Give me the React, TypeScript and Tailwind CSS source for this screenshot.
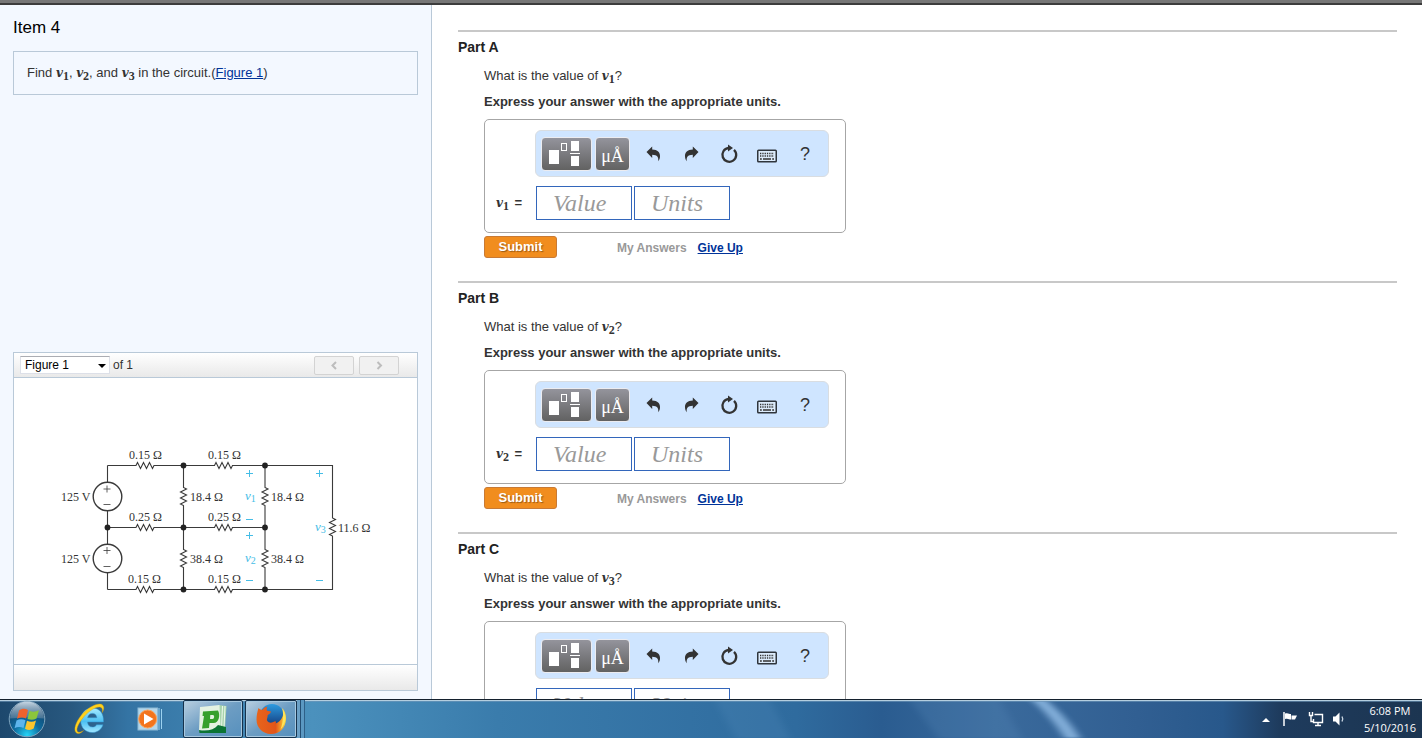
import { useState } from "react";

const PARTS = [
    { name: "Part A", index: 1 },
    { name: "Part B", index: 2 },
    { name: "Part C", index: 3 },
];

function MathVar({ index }: { index: number }) {
    return (
        <span className="font-bold">
            <i className="font-['DejaVu_Serif',serif] text-xs leading-none">v</i>
            <span className="relative top-[3px] font-['Liberation_Serif',serif] text-xs leading-none">{index}</span>
        </span>
    );
}

/* ---------- circuit figure ---------- */

const H_ZIG = "l1.5 -3 l3 6 l3 -6 l3 6 l3 -6 l3 6 l1.5 -3";
const V_ZIG = "l3 1.5 l-6 3 l6 3 l-6 3 l6 3 l-6 3 l3 1.5";

const LABELS = [
    { x: 129, y: 459, text: "0.15 Ω" },
    { x: 208, y: 459, text: "0.15 Ω" },
    { x: 61, y: 501, text: "125 V" },
    { x: 190, y: 501, text: "18.4 Ω" },
    { x: 271, y: 501, text: "18.4 Ω" },
    { x: 129, y: 521, text: "0.25 Ω" },
    { x: 208, y: 521, text: "0.25 Ω" },
    { x: 338, y: 532, text: "11.6 Ω" },
    { x: 61, y: 563, text: "125 V" },
    { x: 190, y: 563, text: "38.4 Ω" },
    { x: 271, y: 563, text: "38.4 Ω" },
    { x: 128, y: 583, text: "0.15 Ω" },
    { x: 208, y: 583, text: "0.15 Ω" },
];

const NODES = [
    [183.5, 465.5],
    [265, 465.5],
    [107.5, 527.5],
    [183.5, 527.5],
    [265, 527.5],
    [183.5, 589.5],
    [265, 589.5],
];

function Circuit() {
    return (
        <svg viewBox="56 446 320 150" className="h-[150px] w-80" role="img" aria-label="Figure 1">
            <g fill="none" stroke="#3a3a3a" strokeWidth="1.1">
                {[465.5, 527.5, 589.5].map((y) => (
                    <path key={y} d={`M107.5 ${y} H136 ${H_ZIG} H214.5 ${H_ZIG} H265`} />
                ))}
                <path d="M107.5 465.5 V482 M107.5 511 V544 M107.5 573 V589.5" />
                {[183.5, 265].map((x) => (
                    <path key={x} d={`M${x} 465.5 V487.5 ${V_ZIG} V549.5 ${V_ZIG} V589.5`} />
                ))}
                <path d={`M265 465.5 H332.5 V518 ${V_ZIG} V589.5 H265`} />
                <circle cx="107.5" cy="496.5" r="14.3" strokeWidth="1.4" />
                <circle cx="107.5" cy="558.5" r="14.3" strokeWidth="1.4" />
                <path
                    strokeWidth="0.8"
                    d="M103.5 489 h7 M107 485.5 v7 M103.5 504.5 h7 M103.5 550.5 h7 M107 547 v7 M103.5 566.5 h7"
                />
            </g>
            {NODES.map(([x, y]) => (
                <circle key={`${x}-${y}`} cx={x} cy={y} r="2.9" fill="#222" />
            ))}
            <g fill="#333" fontSize="12" fontFamily="Liberation Serif, serif">
                {LABELS.map((l) => (
                    <text key={`${l.x}-${l.y}`} x={l.x} y={l.y}>
                        {l.text}
                    </text>
                ))}
            </g>
            <path
                stroke="#45bde6"
                strokeWidth="1"
                fill="none"
                d="M246 473.5 h7 M249.5 470 v7 M246 519.5 h7 M246 535.5 h7 M249.5 532 v7 M246 580.5 h7 M316 473.5 h7 M319.5 470 v7 M316 580.5 h7"
            />
            <g fill="#45bde6" fontSize="13" fontFamily="Liberation Serif, serif">
                {[
                    [245, 500],
                    [245, 562],
                    [315, 531],
                ].map(([x, y], i) => (
                    <text key={i} x={x} y={y}>
                        <tspan fontStyle="italic">v</tspan>
                        <tspan fontSize="10" dy="2">
                            {i + 1}
                        </tspan>
                    </text>
                ))}
            </g>
        </svg>
    );
}

function PageButton({ label, d }: { label: string; d: string }) {
    return (
        <button
            aria-label={label}
            className="flex h-[19px] w-10 items-center justify-center rounded-xs border border-[#d3d3d3] bg-[#f1f1f1]"
        >
            <svg viewBox="0 0 7 9" className="h-[9px] w-[7px]">
                <path d={d} fill="none" stroke="#bdbdbd" strokeWidth="2" />
            </svg>
        </button>
    );
}

function FigurePanel() {
    return (
        <section className="mt-auto mb-2 flex h-[339px] flex-col border border-[#b9c9d8] bg-white">
            <div className="flex h-[25px] shrink-0 items-center border-b border-[#b9c9d8] bg-linear-to-b from-white to-[#e9e9e9] pl-1.5 text-xs text-[#333]">
                <label className="relative flex items-center">
                    <select
                        aria-label="Figure"
                        className="h-[18px] w-[90px] appearance-none border border-[#dde0e8] border-t-[#abadb3] bg-white pl-1 text-xs text-black"
                    >
                        <option>Figure 1</option>
                    </select>
                    <svg viewBox="0 0 8 4" className="pointer-events-none absolute top-2 right-1 h-1 w-2">
                        <path d="M0 0H8L4 4Z" fill="#000" />
                    </svg>
                </label>
                <span className="ml-[3px]">of 1</span>
                <div className="mr-[18px] ml-auto flex gap-[5px]">
                    <PageButton label="Previous figure" d="M5 1L1.5 4.5L5 8" />
                    <PageButton label="Next figure" d="M1.5 1L5 4.5L1.5 8" />
                </div>
            </div>
            <div className="flex flex-1 items-center justify-center">
                <Circuit />
            </div>
            <div className="h-[26px] shrink-0 border-t border-[#b9c9d8] bg-linear-to-b from-white to-[#e9e9e9]" />
        </section>
    );
}

/* ---------- answer editor ---------- */

function UndoIcon() {
    return (
        <svg viewBox="0 0 15 16" className="h-4 w-[15px]" fill="#333">
            <path d="M0.5 6L6.2 0.5V3.6C11.5 3.7 14.3 6.5 14 10.5C13.9 12.5 13.2 14 12.2 15.3C12.7 11.3 11.5 8.9 6.2 8.8V12Z" />
        </svg>
    );
}

function ResetIcon() {
    return (
        <svg viewBox="0 0 18 20" className="h-5 w-[18px]">
            <path d="M14 5.8A6.9 6.9 0 1 1 8.5 4" fill="none" stroke="#333" strokeWidth="2.3" />
            <path d="M8 0.5L13 4L8 7.5Z" fill="#333" />
        </svg>
    );
}

function KeyboardIcon() {
    return (
        <svg viewBox="0 0 20 14" className="mt-1 h-3.5 w-5">
            <rect x="0.75" y="1.25" width="18.5" height="11.5" rx="0.8" fill="#dcebfb" stroke="#2f353c" strokeWidth="1.5" />
            <path d="M3 4.5H17M3 7H17" stroke="#333" strokeWidth="1.3" strokeDasharray="1.3 1" />
            <path d="M3 10H4.8M6 10H14M15.2 10H17" stroke="#333" strokeWidth="1.3" />
        </svg>
    );
}

const DARK_KEY =
    "flex h-[34px] items-center justify-center rounded border border-[#ececf0] bg-linear-to-b from-[#94949c] to-[#626262]";
const TOOL = "flex h-[34px] w-[38px] items-center justify-center";

function Toolbar() {
    return (
        <div className="flex h-[47px] w-[294px] items-center rounded-md border border-[#d9dde1] bg-[#cfe5ff] pl-[5px]">
            <button aria-label="Templates" className={`${DARK_KEY} w-[51px]`}>
                <svg viewBox="0 0 49 32" className="h-8 w-[49px]" fill="#fff">
                    <rect x="7" y="12" width="10" height="14" />
                    <rect x="19.5" y="5.5" width="5" height="7" fill="none" stroke="#fff" />
                    <rect x="29" y="3" width="8" height="10" />
                    <rect x="28" y="15" width="10" height="1" />
                    <rect x="29" y="18" width="8" height="10" />
                </svg>
            </button>
            <button
                aria-label="Units symbols"
                className={`${DARK_KEY} ml-[3px] w-[35px] pt-1 font-['Liberation_Serif',serif] text-lg text-white`}
            >
                μÅ
            </button>
            <button aria-label="Undo" className={`${TOOL} ml-1`}>
                <UndoIcon />
            </button>
            <button aria-label="Redo" className={TOOL}>
                <span className="-scale-x-100">
                    <UndoIcon />
                </span>
            </button>
            <button aria-label="Reset" className={TOOL}>
                <ResetIcon />
            </button>
            <button aria-label="Keyboard" className={TOOL}>
                <KeyboardIcon />
            </button>
            <button aria-label="Help" className={`${TOOL} text-lg text-[#333]`}>
                ?
            </button>
        </div>
    );
}

const ANSWER_INPUT =
    "h-[34px] w-24 border border-[#3366bb] bg-white pl-4 font-['Liberation_Serif',serif] text-2xl text-[#333] italic outline-none placeholder:text-[#999]";

function Part({ name, index }: { name: string; index: number }) {
    const [value, setValue] = useState("");
    const [units, setUnits] = useState("");

    return (
        <section className="border-t-2 border-[#c8c8c8] pt-[5px] pb-[23px] text-[13px] leading-5 text-[#333]">
            <h2 className="text-sm leading-5 font-bold text-[#222]">{name}</h2>
            <div className="pl-[26px]">
                <p className="mt-[9px] h-5">
                    What is the value of <MathVar index={index} />?
                </p>
                <p className="mt-1.5 font-bold">Express your answer with the appropriate units.</p>
                <div className="mt-[7px] w-[362px] rounded-[5px] border border-[#a6a6a6] pt-2.5 pb-3">
                    <div className="pl-[50px]">
                        <Toolbar />
                    </div>
                    <div className="mt-[9px] flex items-center">
                        <span className="w-[51px] pl-[11px]">
                            <MathVar index={index} /> <b className="ml-0.5">=</b>
                        </span>
                        <div className="flex gap-0.5">
                            <input
                                aria-label={`Value ${index}`}
                                placeholder="Value"
                                value={value}
                                onChange={(e) => setValue(e.target.value)}
                                className={ANSWER_INPUT}
                            />
                            <input
                                aria-label={`Units ${index}`}
                                placeholder="Units"
                                value={units}
                                onChange={(e) => setUnits(e.target.value)}
                                className={ANSWER_INPUT}
                            />
                        </div>
                    </div>
                </div>
                <div className="mt-[3px] flex items-center text-xs font-bold">
                    <button className="h-[22px] w-[73px] rounded-[3px] border border-[#c87a35] bg-[#f18d1e] text-[13px] leading-5 font-bold text-white text-shadow-[1px_1px_1px_#9a5a14]">
                        Submit
                    </button>
                    <span className="ml-[60px] pt-0.5 text-[#999]">My Answers</span>
                    <a href="#give-up" className="ml-[11px] pt-0.5 text-[#003399] underline">
                        Give Up
                    </a>
                </div>
            </div>
        </section>
    );
}

/* ---------- taskbar ---------- */

function StartOrb() {
    return (
        <svg viewBox="0 0 38 38" className="h-[38px] w-[38px]">
            <defs>
                <radialGradient id="orb" cx="50%" cy="95%" r="85%">
                    <stop offset="0" stopColor="#25d4f7" />
                    <stop offset="0.45" stopColor="#0d6c9f" />
                    <stop offset="1" stopColor="#153f66" />
                </radialGradient>
                <linearGradient id="orbShine" x2="0" y2="1">
                    <stop offset="0" stopColor="#dbe9f4" stopOpacity="0.9" />
                    <stop offset="1" stopColor="#7792a8" stopOpacity="0.5" />
                </linearGradient>
            </defs>
            <circle cx="19" cy="19" r="17.8" fill="url(#orb)" stroke="#7fa4bd" />
            <path d="M2 18.5A17 17 0 0 1 36 18.5C26 17 12 17 2 18.5Z" fill="url(#orbShine)" />
            <path d="M11 10.5C14 8.3 17 8.3 20 10L18 18.5C15 17 12 17 9 18.8Z" fill="#f0622d" />
            <path d="M21.5 10.7C24.5 12.2 27.5 12 31 10.3L28.5 18.5C25.5 20 22.5 20 19.5 18.9Z" fill="#8cc63c" />
            <path d="M8.5 20.4C11.5 18.8 14.5 18.8 17.5 20.2L15.5 28C12.5 26.6 9.5 26.6 6.5 28.3Z" fill="#5db5ec" />
            <path d="M19 20.7C22 22 25 22 28 20.4L25.7 28.5C23 30.3 20 30.3 17 28.7Z" fill="#fbc52e" />
        </svg>
    );
}

function ExplorerIcon() {
    return (
        <svg viewBox="0 0 34 34" className="h-[34px] w-[34px]">
            <defs>
                <linearGradient id="ie" x2="0" y2="1">
                    <stop offset="0" stopColor="#a9ecff" />
                    <stop offset="0.55" stopColor="#4cc0f2" />
                    <stop offset="1" stopColor="#a2e7ff" />
                </linearGradient>
            </defs>
            <path
                fillRule="evenodd"
                fill="url(#ie)"
                stroke="#3293cd"
                strokeWidth="0.5"
                d="M30.5 20H14.5C14.8 23.2 16.5 25 19.5 25C21.5 25 22.9 24.2 23.5 22.7H30C28.5 27.5 24.5 30.5 19.3 30.5C12.3 30.5 7.7 25.6 7.7 18.5C7.7 11.3 12.6 6 19.3 6C26.6 6 31 11.5 30.5 20ZM14.6 15.7H23.9C23.6 12.9 21.9 11.4 19.4 11.4C16.8 11.4 15.1 12.9 14.6 15.7Z"
            />
            <path
                d="M6 31.5C-0.5 32 1 22 8.5 13C16 4 27 -0.5 30 3.5C31.5 5.5 30.7 8 29.3 10.6C29.7 8 29.5 6.6 28 5.5C24.5 3.7 16.5 8 10.5 15.2C4.5 22.4 2.5 28.5 5 30C6.5 30.8 8.3 30 10.5 28.6C9 30.2 7.5 31.3 6 31.5Z"
                fill="#ffd21c"
                stroke="#d99c0c"
                strokeWidth="0.4"
            />
        </svg>
    );
}

function MediaPlayerIcon() {
    return (
        <svg viewBox="0 0 26 26" className="h-[26px] w-[26px]">
            <path d="M22 2V24M24.5 3V23" stroke="#9cd2f0" />
            <rect x="1" y="2" width="19.5" height="22" fill="#b3d6ea" stroke="#8bb9d6" />
            <circle cx="10.7" cy="13" r="9" fill="#f3741c" stroke="#f8a560" />
            <path d="M7 7.5L16.5 13L7 18.5Z" fill="#fff" />
        </svg>
    );
}

function ProjectIcon() {
    return (
        <svg viewBox="0 0 30 32" className="h-8 w-[30px]">
            <path d="M20 2L28.5 3L27 26H20Z" fill="#a8d5ac" />
            <path d="M24.5 3L23.5 26M27 3L26 25" stroke="#eef8ee" />
            <path d="M2 4L21.5 2L22.5 27L1 28Z" fill="#e4f2e2" />
            <path
                fillRule="evenodd"
                fill="#36a02c"
                d="M5 8.5L20 7.5C22.5 12 21 20 15.5 20H11.5L11 25L4 25.5L6 13H4.5ZM12.3 12L12 16H14.5C16.5 16 16.7 12 15 12Z"
            />
            <path d="M1 27C9 28.5 16 27 20 22L28 24V30H1.5Z" fill="#0b7434" />
        </svg>
    );
}

function FirefoxIcon() {
    return (
        <svg viewBox="0 0 32 32" className="h-8 w-8">
            <defs>
                <linearGradient id="globe" x2="0" y2="1">
                    <stop offset="0" stopColor="#2d9be0" />
                    <stop offset="1" stopColor="#102e70" />
                </linearGradient>
                <linearGradient id="fox" x2="1" y2="0">
                    <stop offset="0" stopColor="#e8641b" />
                    <stop offset="0.65" stopColor="#e2551a" />
                    <stop offset="1" stopColor="#ffdf3a" />
                </linearGradient>
            </defs>
            <circle cx="17" cy="13.5" r="12.5" fill="url(#globe)" />
            <path
                fill="url(#fox)"
                d="M3.5 5C4.5 6.3 6 7 7.5 6.8C9 4.8 10.5 4 12.5 3.6C11.5 5 11.5 6.5 12 7.8L16 8.5C15.8 10.5 13.500 11 12.5 12.5C13 14.5 11.500 15.5 12 17.5C14 20.500 17 20 19.5 18.500C21 18 21.500 19 20.5 20.500C25.500 19 28 14 28.300 10.500C29 9 28 6 26.5 4.500C29.5 7 31 10.5 31 16C30.5 25 24.5 31 16 31C7.500 31 1.500 24.5 1.5 16.5C1.5 12 2.5 8 3.5 5Z"
            />
            <path d="M27 5C32.5 12 31 21 25.5 26.5C28 20 29 11 27 5Z" fill="#ffe35b" />
        </svg>
    );
}

const RUNNING_APP =
    "flex h-[38px] items-center justify-center border border-[#16324d] bg-linear-to-br from-[#b9cfe0] via-[#6d9dc3] to-[#5690bd] shadow-[inset_0_0_0_1px_#a7c8df]";

function Taskbar() {
    return (
        <footer className="relative flex h-[39px] shrink-0 items-center overflow-hidden border-t border-[#14202d] bg-[#3878aa] text-white">
            <svg
                viewBox="0 0 1422 38"
                preserveAspectRatio="none"
                className="absolute inset-0 h-full w-full"
                aria-hidden="true"
            >
                <defs>
                    <linearGradient id="bar">
                        <stop offset="0" stopColor="#1d486d" />
                        <stop offset="0.05" stopColor="#28587f" />
                        <stop offset="0.09" stopColor="#3474a4" />
                        <stop offset="0.22" stopColor="#4b91bd" />
                        <stop offset="0.35" stopColor="#3a7cac" />
                        <stop offset="0.56" stopColor="#2f6b9e" />
                        <stop offset="0.62" stopColor="#2a5c90" />
                        <stop offset="0.7" stopColor="#3a6a9c" />
                        <stop offset="0.8" stopColor="#315f92" />
                        <stop offset="0.86" stopColor="#28588b" />
                        <stop offset="0.9" stopColor="#1e3b5d" />
                        <stop offset="1" stopColor="#1c3551" />
                    </linearGradient>
                    <filter id="soft" x="-50%" width="200%">
                        <feGaussianBlur stdDeviation="4 1" />
                    </filter>
                </defs>
                <rect width="1422" height="38" fill="url(#bar)" />
                <path d="M715 0H770L790 38H735Z" fill="#5b93c2" opacity="0.2" filter="url(#soft)" />
                <path d="M910 0H1000L1022 38H938Z" fill="#6192c1" opacity="0.2" filter="url(#soft)" />
                <path
                    d="M1031 0H1046C1061 12 1072 25 1080 38H1065C1054 22 1043 9 1031 0Z"
                    fill="#8ab6e0"
                    opacity="0.9"
                    filter="url(#soft)"
                />
                <rect width="1422" height="1" fill="#b4cedf" />
                <rect y="1" width="1422" height="1" fill="#6f98b9" opacity="0.6" />
            </svg>
            <nav className="relative flex items-center" aria-label="Taskbar">
                <button aria-label="Start" className="ml-2">
                    <StartOrb />
                </button>
                <button aria-label="Internet Explorer" className="ml-[27px]">
                    <ExplorerIcon />
                </button>
                <button aria-label="Media Player" className="ml-[30px]">
                    <MediaPlayerIcon />
                </button>
                <button aria-label="Project" className={`${RUNNING_APP} ml-5 w-[60px] rounded-xs`}>
                    <ProjectIcon />
                </button>
                <div className="ml-0.5 flex">
                    <button aria-label="Firefox" className={`${RUNNING_APP} w-[52px] rounded-xs`}>
                        <FirefoxIcon />
                    </button>
                    <span className="w-1 border-r border-[#234e73] bg-[#6ba0c6]" />
                    <span className="w-1 border-r border-[#2e6088] bg-[#5b98c2]" />
                </div>
            </nav>
            <div className="relative mr-1.5 ml-auto flex items-center">
                <svg viewBox="0 0 8 4" className="mt-0.5 h-1 w-2">
                    <path d="M0 4L4 0L8 4Z" fill="#fff" />
                </svg>
                <svg viewBox="0 0 16 16" className="ml-3 h-4 w-4">
                    <path d="M2 1V15" stroke="#fff" strokeWidth="1.5" />
                    <path d="M3 2.5C6 1.5 7 3 9 3V8.5C7 8.5 6 7 3 8ZM9.5 4.5H15L13 8.5H9.5Z" fill="#fff" />
                </svg>
                <svg viewBox="0 0 16 16" className="ml-2.5 h-4 w-4" fill="none" stroke="#fff" strokeWidth="1.4">
                    <path d="M6.5 3.5H14.5V11.5H5.5V8M7 14.5H13M10 12V14.5" />
                    <path d="M1.5 1V4.5H4.5V1M3 4.5V10.5H5" />
                </svg>
                <svg viewBox="0 0 16 16" className="ml-2 h-4 w-4">
                    <path d="M1 5.5H3.5L7.5 1.5V14.5L3.5 10.5H1Z" fill="#fff" />
                    <path d="M10 5.5Q11.5 8 10 10.5" stroke="#c9d6e2" fill="none" strokeWidth="1.4" />
                </svg>
                <div className="ml-4 flex flex-col text-center font-['Open_Sans',sans-serif] text-[11px] leading-[17px]">
                    <span>6:08 PM</span>
                    <span>5/10/2016</span>
                </div>
            </div>
        </footer>
    );
}

export default function App() {
    return (
        <div className="flex h-screen flex-col overflow-hidden bg-white font-['Liberation_Sans',Arial,sans-serif]">
            <div className="h-[5px] shrink-0 border-b-2 border-[#3c3c3c] bg-[#777]" />
            <div className="flex min-h-0 flex-1">
                <aside className="flex w-[432px] shrink-0 flex-col border-r border-[#b9c9d8] bg-[#f3f8ff] px-[13px]">
                    <h1 className="mt-3 text-[17px] leading-[22px] text-black">Item 4</h1>
                    <p className="mt-3 h-11 border border-[#b9c9d8] pl-[13px] text-[13px] leading-[42px] text-[#333]">
                        Find <MathVar index={1} />, <MathVar index={2} />, and <MathVar index={3} /> in the circuit.(
                        <a href="#figure" className="text-[#003399] underline">
                            Figure 1
                        </a>
                        )
                    </p>
                    <FigurePanel />
                </aside>
                <main className="min-w-0 flex-1 overflow-hidden pt-[25px] pr-[25px] pl-[26px]">
                    {PARTS.map((part) => (
                        <Part key={part.name} {...part} />
                    ))}
                </main>
            </div>
            <Taskbar />
        </div>
    );
}
